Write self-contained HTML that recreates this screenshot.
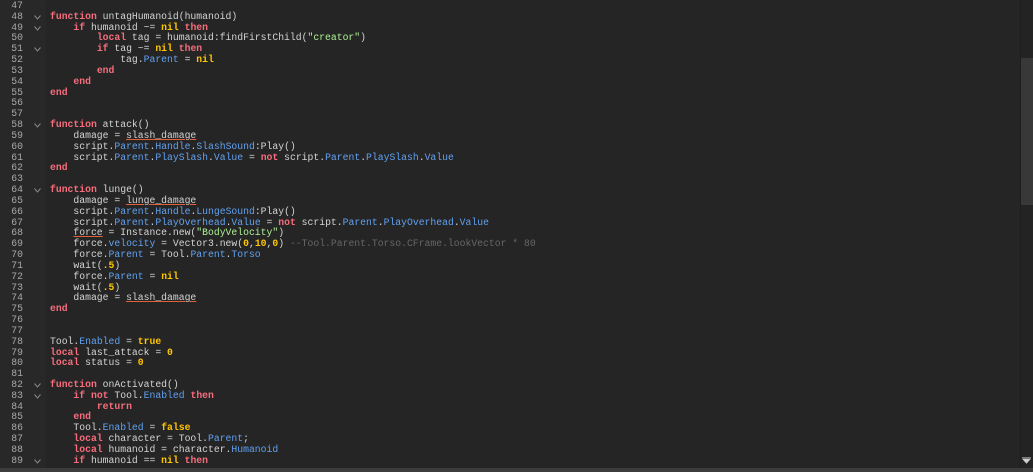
<!DOCTYPE html>
<html><head><style>
html,body{margin:0;padding:0;background:#252525;width:1033px;height:472px;overflow:hidden}
#g{position:absolute;left:0;top:0;width:46px;height:468px;background:#282828}
#c{position:absolute;left:0;top:1px;width:1000px;font-family:"Liberation Mono",monospace;font-size:9.75px;line-height:10.83px;color:#d4d4d4}
.l{position:relative;height:10.83px}
.n{position:absolute;left:0;width:23px;text-align:right;color:#a8a8a8}
.t{position:absolute;left:50px;white-space:pre}
.f{position:absolute;left:34px;top:3px;width:7px;height:5px}
.k{color:#f86d7c;font-weight:bold}.y{color:#ffc600;font-weight:bold}.p{color:#61a1f1}.s{color:#adf195}.m{color:#666666}.u{text-decoration:underline;text-decoration-color:#e0623a}
#sb{position:absolute;left:1020px;top:0;width:13px;height:468px;background:#232323;border-left:1px solid #1e1e1e}
#th{position:absolute;left:1021px;top:58px;width:12px;height:147px;background:#383838}
#bt{position:absolute;left:0;top:468px;width:1033px;height:4px;background:#3c3c3c}
</style></head><body>
<div id="g"></div>
<div id="sb"></div><div id="th"></div>
<svg style="position:absolute;left:1022px;top:457px" width="9" height="7"><path d="M0 0H9M1 2L4.5 6L8 2Z" stroke="#cfcfcf" fill="#cfcfcf"/></svg>
<div id="bt"></div>
<div id="c"><div class="l"><span class="n">47</span><span class="t"></span></div><div class="l"><span class="n">48</span><svg class="f"><path d="M0.5 0.5L3.5 4L6.5 0.5" stroke="#888" fill="none"/></svg><span class="t"><span class="k">function</span> untagHumanoid(humanoid)</span></div><div class="l"><span class="n">49</span><svg class="f"><path d="M0.5 0.5L3.5 4L6.5 0.5" stroke="#888" fill="none"/></svg><span class="t">    <span class="k">if</span> humanoid ~= <span class="y">nil</span> <span class="k">then</span></span></div><div class="l"><span class="n">50</span><span class="t">        <span class="k">local</span> tag = humanoid:findFirstChild(<span class="s">"creator"</span>)</span></div><div class="l"><span class="n">51</span><svg class="f"><path d="M0.5 0.5L3.5 4L6.5 0.5" stroke="#888" fill="none"/></svg><span class="t">        <span class="k">if</span> tag ~= <span class="y">nil</span> <span class="k">then</span></span></div><div class="l"><span class="n">52</span><span class="t">            tag.<span class="p">Parent</span> = <span class="y">nil</span></span></div><div class="l"><span class="n">53</span><span class="t">        <span class="k">end</span></span></div><div class="l"><span class="n">54</span><span class="t">    <span class="k">end</span></span></div><div class="l"><span class="n">55</span><span class="t"><span class="k">end</span></span></div><div class="l"><span class="n">56</span><span class="t"></span></div><div class="l"><span class="n">57</span><span class="t"></span></div><div class="l"><span class="n">58</span><svg class="f"><path d="M0.5 0.5L3.5 4L6.5 0.5" stroke="#888" fill="none"/></svg><span class="t"><span class="k">function</span> attack()</span></div><div class="l"><span class="n">59</span><span class="t">    damage = <span class="u">slash_damage</span></span></div><div class="l"><span class="n">60</span><span class="t">    script.<span class="p">Parent</span>.<span class="p">Handle</span>.<span class="p">SlashSound</span>:Play()</span></div><div class="l"><span class="n">61</span><span class="t">    script.<span class="p">Parent</span>.<span class="p">PlaySlash</span>.<span class="p">Value</span> = <span class="k">not</span> script.<span class="p">Parent</span>.<span class="p">PlaySlash</span>.<span class="p">Value</span></span></div><div class="l"><span class="n">62</span><span class="t"><span class="k">end</span></span></div><div class="l"><span class="n">63</span><span class="t"></span></div><div class="l"><span class="n">64</span><svg class="f"><path d="M0.5 0.5L3.5 4L6.5 0.5" stroke="#888" fill="none"/></svg><span class="t"><span class="k">function</span> lunge()</span></div><div class="l"><span class="n">65</span><span class="t">    damage = <span class="u">lunge_damage</span></span></div><div class="l"><span class="n">66</span><span class="t">    script.<span class="p">Parent</span>.<span class="p">Handle</span>.<span class="p">LungeSound</span>:Play()</span></div><div class="l"><span class="n">67</span><span class="t">    script.<span class="p">Parent</span>.<span class="p">PlayOverhead</span>.<span class="p">Value</span> = <span class="k">not</span> script.<span class="p">Parent</span>.<span class="p">PlayOverhead</span>.<span class="p">Value</span></span></div><div class="l"><span class="n">68</span><span class="t">    <span class="u">force</span> = Instance.new(<span class="s">"BodyVelocity"</span>)</span></div><div class="l"><span class="n">69</span><span class="t">    force.<span class="p">velocity</span> = Vector3.new(<span class="y">0</span>,<span class="y">10</span>,<span class="y">0</span>) <span class="m">--Tool.Parent.Torso.CFrame.lookVector * 80</span></span></div><div class="l"><span class="n">70</span><span class="t">    force.<span class="p">Parent</span> = Tool.<span class="p">Parent</span>.<span class="p">Torso</span></span></div><div class="l"><span class="n">71</span><span class="t">    wait(<span class="y">.5</span>)</span></div><div class="l"><span class="n">72</span><span class="t">    force.<span class="p">Parent</span> = <span class="y">nil</span></span></div><div class="l"><span class="n">73</span><span class="t">    wait(<span class="y">.5</span>)</span></div><div class="l"><span class="n">74</span><span class="t">    damage = <span class="u">slash_damage</span></span></div><div class="l"><span class="n">75</span><span class="t"><span class="k">end</span></span></div><div class="l"><span class="n">76</span><span class="t"></span></div><div class="l"><span class="n">77</span><span class="t"></span></div><div class="l"><span class="n">78</span><span class="t">Tool.<span class="p">Enabled</span> = <span class="y">true</span></span></div><div class="l"><span class="n">79</span><span class="t"><span class="k">local</span> last_attack = <span class="y">0</span></span></div><div class="l"><span class="n">80</span><span class="t"><span class="k">local</span> status = <span class="y">0</span></span></div><div class="l"><span class="n">81</span><span class="t"></span></div><div class="l"><span class="n">82</span><svg class="f"><path d="M0.5 0.5L3.5 4L6.5 0.5" stroke="#888" fill="none"/></svg><span class="t"><span class="k">function</span> onActivated()</span></div><div class="l"><span class="n">83</span><svg class="f"><path d="M0.5 0.5L3.5 4L6.5 0.5" stroke="#888" fill="none"/></svg><span class="t">    <span class="k">if</span> <span class="k">not</span> Tool.<span class="p">Enabled</span> <span class="k">then</span></span></div><div class="l"><span class="n">84</span><span class="t">        <span class="k">return</span></span></div><div class="l"><span class="n">85</span><span class="t">    <span class="k">end</span></span></div><div class="l"><span class="n">86</span><span class="t">    Tool.<span class="p">Enabled</span> = <span class="y">false</span></span></div><div class="l"><span class="n">87</span><span class="t">    <span class="k">local</span> character = Tool.<span class="p">Parent</span>;</span></div><div class="l"><span class="n">88</span><span class="t">    <span class="k">local</span> humanoid = character.<span class="p">Humanoid</span></span></div><div class="l"><span class="n">89</span><svg class="f"><path d="M0.5 0.5L3.5 4L6.5 0.5" stroke="#888" fill="none"/></svg><span class="t">    <span class="k">if</span> humanoid == <span class="y">nil</span> <span class="k">then</span></span></div></div>
</body></html>
